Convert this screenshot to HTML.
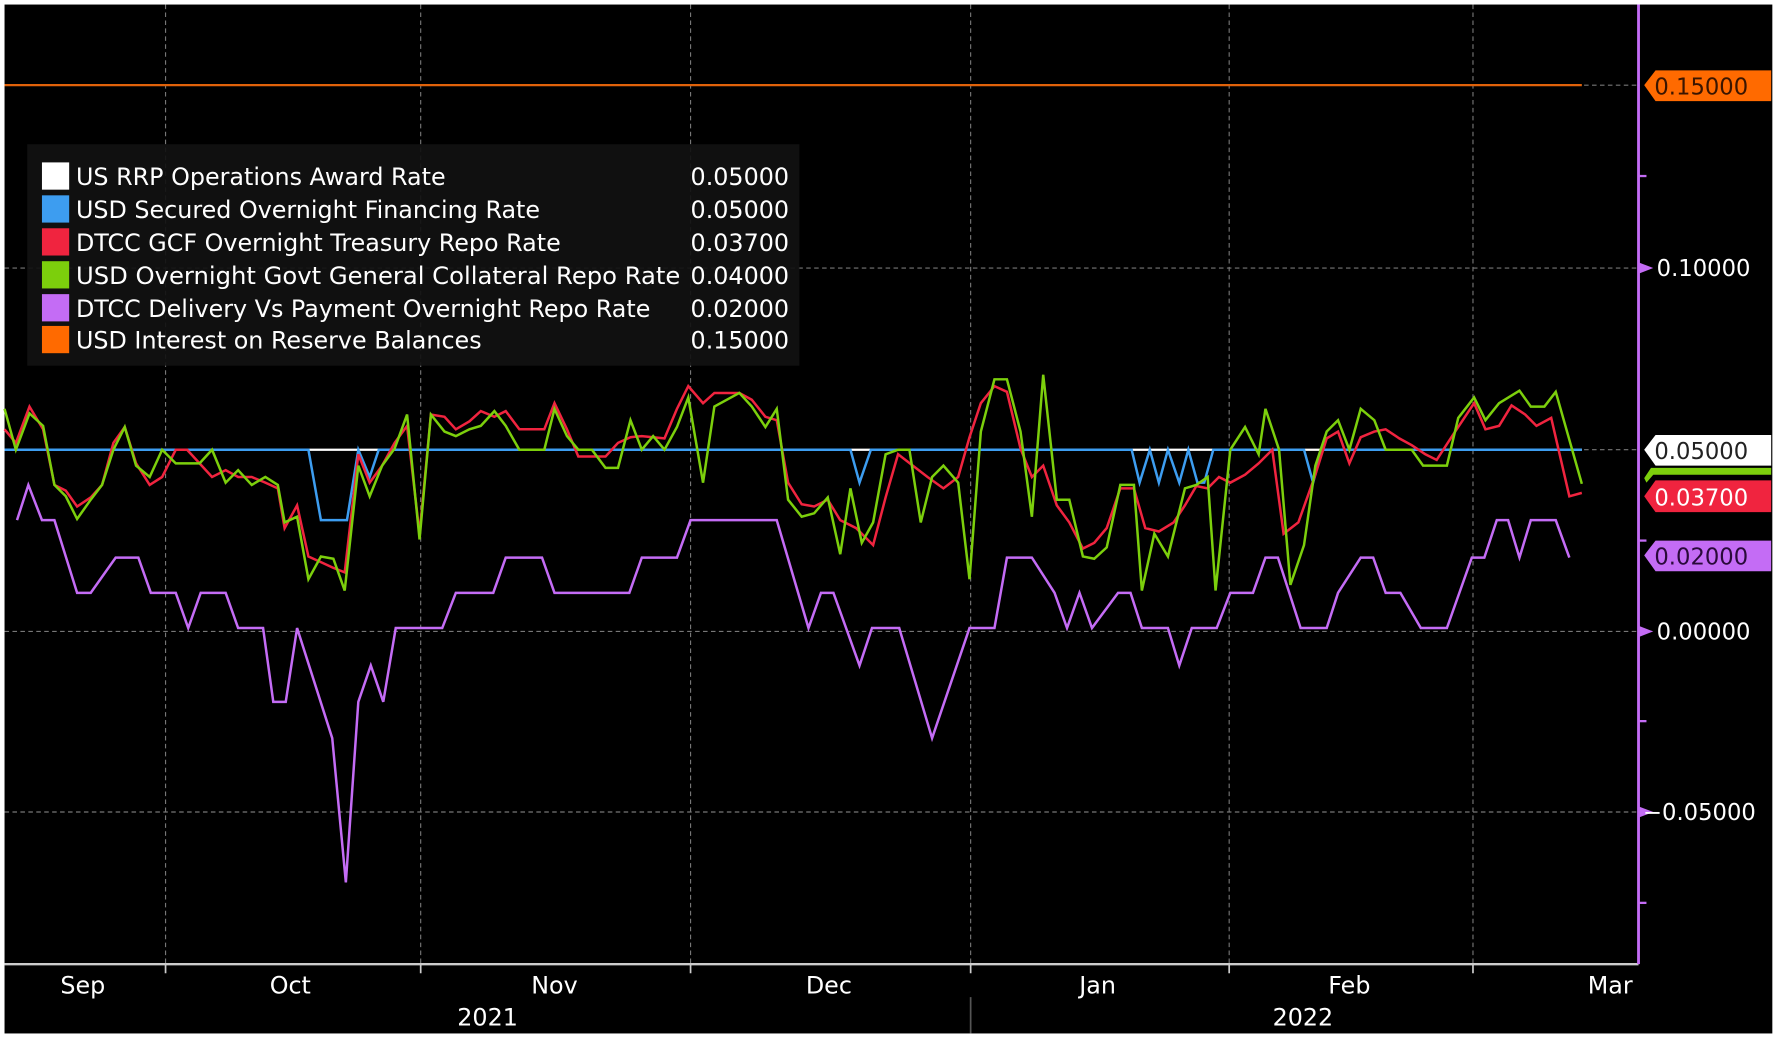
<!DOCTYPE html>
<html><head><meta charset="utf-8"><style>
html,body{margin:0;padding:0;background:#fff;}
svg{display:block;}
text{font-family:"DejaVu Sans","Liberation Sans",sans-serif;}
</style></head><body>
<svg width="1778" height="1038" viewBox="0 0 1568 914" preserveAspectRatio="none" xmlns="http://www.w3.org/2000/svg">
<rect x="0" y="0" width="1568" height="914" fill="#fff"/>
<rect x="4" y="4" width="1559" height="906" fill="#000"/>
<!-- grid -->
<g stroke="#777" stroke-width="1" stroke-dasharray="4,3">
<line x1="146" y1="4" x2="146" y2="849"/><line x1="371" y1="4" x2="371" y2="849"/>
<line x1="609" y1="4" x2="609" y2="849"/><line x1="856" y1="4" x2="856" y2="849"/>
<line x1="1084" y1="4" x2="1084" y2="849"/><line x1="1299" y1="4" x2="1299" y2="849"/>
<line x1="4" y1="75" x2="1445" y2="75"/><line x1="4" y1="236" x2="1445" y2="236"/>
<line x1="4" y1="396" x2="1445" y2="396"/><line x1="4" y1="556" x2="1445" y2="556"/>
<line x1="4" y1="715" x2="1445" y2="715"/>
</g>
<!-- legend -->
<rect x="24" y="127" width="681" height="195" fill="#111" opacity="0.92"/>
<g font-size="21" fill="#fff">
<rect x="37" y="143" width="24" height="24" fill="#fff"/><text x="67" y="163">US RRP Operations Award Rate</text><text x="609" y="163">0.05000</text>
<rect x="37" y="172" width="24" height="24" fill="#3d9df0"/><text x="67" y="192">USD Secured Overnight Financing Rate</text><text x="609" y="192">0.05000</text>
<rect x="37" y="201" width="24" height="24" fill="#f0243f"/><text x="67" y="221">DTCC GCF Overnight Treasury Repo Rate</text><text x="609" y="221">0.03700</text>
<rect x="37" y="230" width="24" height="24" fill="#7ccf0c"/><text x="67" y="250" textLength="533" lengthAdjust="spacingAndGlyphs">USD Overnight Govt General Collateral Repo Rate</text><text x="609" y="250">0.04000</text>
<rect x="37" y="259" width="24" height="24" fill="#c46cf5"/><text x="67" y="279">DTCC Delivery Vs Payment Overnight Repo Rate</text><text x="609" y="279">0.02000</text>
<rect x="37" y="287" width="24" height="24" fill="#ff6a00"/><text x="67" y="307">USD Interest on Reserve Balances</text><text x="609" y="307">0.15000</text>
</g>
<!-- orange line -->
<line x1="4" y1="75" x2="1395" y2="75" stroke="#e0620a" stroke-width="2"/>
<!-- white + blue -->
<line x1="4" y1="396" x2="1395" y2="396" stroke="#fff" stroke-width="2"/>
<polyline fill="none" stroke="#3d9df0" stroke-width="2.2" points="4,396 272,396 283,458 306,458 316,396 326,420 334,396 750,396 758,425 768,396 998,396 1005,425 1014,396 1022,425 1030,396 1040,425 1048,396 1056,425 1062,425 1070,396 1150,396 1158,425 1166,396 1395,396"/>
<!-- purple -->
<polyline fill="none" stroke="#c46cf5" stroke-width="2.2" points="15,458 25,427 37,458 48,458 68,522 80,522 102,491 122,491 133,522 155,522 166,553 177,522 199,522 210,553 232,553 241,618 252,618 262,553 293,650 305,777 316,618 327,586 338,618 349,553 390,553 402,522 435,522 446,491 478,491 489,522 555,522 566,491 597,491 609,458 685,458 713,553 724,522 735,522 758,586 769,553 793,553 822,650 855,553 877,553 888,491 910,491 930,522 941,553 952,522 963,553 986,522 997,522 1007,553 1030,553 1040,586 1051,553 1073,553 1085,522 1105,522 1116,491 1127,491 1147,553 1170,553 1180,522 1200,491 1211,491 1222,522 1235,522 1253,553 1276,553 1298,491 1309,491 1320,458 1330,458 1340,491 1350,458 1372,458 1384,491"/>
<!-- red -->
<polyline fill="none" stroke="#f0243f" stroke-width="2.2" points="4,378 14,390 26,358 38,378 48,427 58,432 68,446 80,438 90,427 100,390 110,376 120,408 132,427 143,420 155,396 165,396 176,408 187,420 199,414 210,420 222,420 234,425 245,430 251,465 262,445 272,490 283,495 294,500 304,504 316,400 326,425 337,410 348,390 359,375 370,470 380,365 392,367 402,378 414,371 424,362 436,367 446,362 458,378 480,378 489,355 500,378 510,402 522,402 534,402 545,390 556,385 566,384 586,386 597,360 607,340 620,355 630,346 652,346 663,352 675,367 685,370 695,425 707,444 718,446 730,440 741,458 755,465 770,480 781,438 792,400 805,410 818,420 832,430 845,420 855,385 865,355 877,340 888,345 900,395 910,420 920,410 932,445 943,460 955,483 965,478 976,465 988,430 1000,430 1010,465 1022,468 1035,460 1045,445 1055,428 1065,430 1075,420 1085,425 1098,418 1110,408 1122,396 1132,470 1145,460 1160,418 1170,386 1180,380 1190,408 1200,385 1212,380 1222,378 1234,386 1245,392 1257,400 1267,405 1280,385 1290,370 1300,355 1310,378 1322,375 1333,357 1345,365 1355,375 1368,368 1384,437 1395,434"/>
<!-- green -->
<polyline fill="none" stroke="#7ccf0c" stroke-width="2.2" points="4,360 14,396 26,364 38,375 48,427 58,437 68,457 80,440 90,427 100,396 110,376 120,410 132,420 143,396 155,408 176,408 187,396 199,425 210,414 222,427 234,420 245,427 251,460 262,455 272,510 283,490 294,492 304,520 316,410 326,437 337,410 348,395 359,365 370,475 380,365 392,380 402,384 414,378 424,375 436,362 446,375 458,396 480,396 489,360 500,384 510,396 522,396 534,412 545,412 556,370 566,396 576,384 586,396 597,376 607,350 620,425 630,358 652,346 663,358 675,376 685,360 695,440 707,455 718,452 730,438 741,488 750,430 760,478 770,460 781,400 792,396 802,396 812,460 822,420 832,410 845,425 855,510 865,380 877,334 888,334 900,380 910,455 920,330 932,440 943,440 955,490 965,492 976,482 988,427 1000,427 1007,520 1018,470 1030,490 1045,430 1055,427 1065,420 1072,520 1085,396 1098,376 1110,400 1116,360 1128,396 1138,515 1150,480 1160,410 1170,380 1180,370 1190,396 1200,360 1212,370 1222,396 1245,396 1255,410 1276,410 1286,368 1300,350 1310,370 1322,355 1340,344 1350,358 1362,358 1372,345 1395,426"/>
<!-- bottom axis -->
<line x1="4" y1="849" x2="1445" y2="849" stroke="#ccc" stroke-width="2"/>
<g stroke="#ccc" stroke-width="1.5">
<line x1="146" y1="849" x2="146" y2="857"/><line x1="371" y1="849" x2="371" y2="857"/><line x1="609" y1="849" x2="609" y2="857"/><line x1="856" y1="849" x2="856" y2="857"/><line x1="1084" y1="849" x2="1084" y2="857"/><line x1="1299" y1="849" x2="1299" y2="857"/>
<line x1="856" y1="878" x2="856" y2="910" stroke="#555"/>
</g>
<g font-size="21" fill="#fff" text-anchor="middle">
<text x="73" y="875">Sep</text><text x="256" y="875">Oct</text><text x="489" y="875">Nov</text><text x="731" y="875">Dec</text><text x="968" y="875">Jan</text><text x="1190" y="875">Feb</text><text x="1420" y="875">Mar</text>
<text x="430" y="903">2021</text><text x="1149" y="903">2022</text>
</g>
<!-- right axis -->
<line x1="1445" y1="4" x2="1445" y2="849" stroke="#c46cf5" stroke-width="2.5"/>
<g stroke="#c46cf5" stroke-width="2">
<line x1="1445" y1="155" x2="1452" y2="155"/><line x1="1445" y1="476" x2="1452" y2="476"/><line x1="1445" y1="635" x2="1452" y2="635"/><line x1="1445" y1="795" x2="1452" y2="795"/>
</g>
<g fill="#c46cf5">
<polygon points="1445,231 1458,236 1445,241"/><polygon points="1445,551 1458,556 1445,561"/><polygon points="1445,710 1458,715 1445,720"/>
</g>
<g font-size="20" fill="#fff">
<text x="1461" y="243">0.10000</text><text x="1461" y="563">0.00000</text><text x="1449" y="722">−0.05000</text>
</g>
<!-- tags -->
<polygon points="1450,75 1460,62 1562,62 1562,89 1460,89" fill="#ff6a00"/>
<text x="1459" y="83" font-size="20" fill="#3a1500">0.15000</text>
<polygon points="1450,396 1460,383 1562,383 1562,410 1460,410" fill="#fff"/>
<text x="1459" y="404" font-size="20" fill="#222">0.05000</text>
<polygon points="1450,421 1456,412 1562,412 1562,418 1458,418 1452,425" fill="#7ccf0c"/>
<polygon points="1450,437 1460,423 1562,423 1562,451 1460,451" fill="#f0243f"/>
<text x="1459" y="445" font-size="20" fill="#fff">0.03700</text>
<polygon points="1450,489 1460,476 1562,476 1562,503 1460,503" fill="#c46cf5"/>
<text x="1459" y="497" font-size="20" fill="#2a0a3a">0.02000</text>
</svg>
</body></html>
